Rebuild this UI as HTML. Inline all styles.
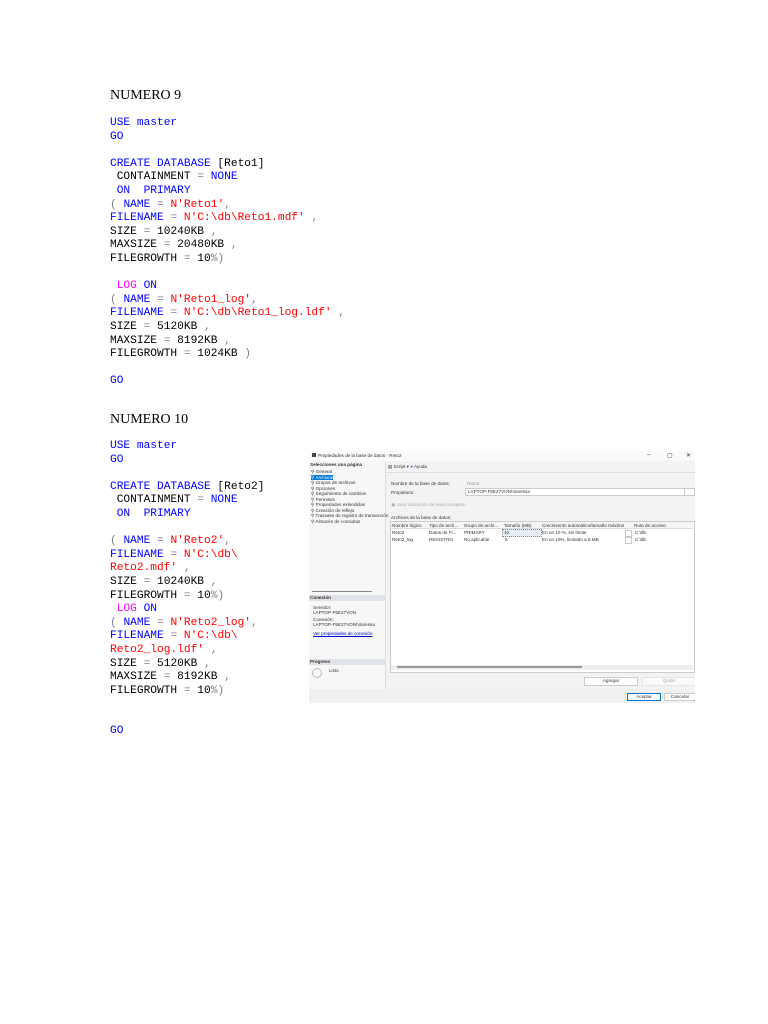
<!DOCTYPE html>
<html><head><meta charset="utf-8">
<style>
body{margin:0;width:768px;height:1024px;background:#fff;position:relative;overflow:hidden}
.h{position:absolute;left:110px;font-family:"Liberation Serif",serif;font-size:14px;color:#000;margin:0}
pre{position:absolute;left:110px;margin:0;font-family:"Liberation Mono",monospace;font-size:11.2px;line-height:13.6px;color:#000}
.b{color:#0000ff}.r{color:#ff0000}.g{color:#808080}.m{color:#ff00ff}
#ss{position:absolute;left:309px;top:451px;width:386px;height:252px;background:#f3f3f3;font-family:"Liberation Sans",sans-serif;font-size:4.6px;color:#333;overflow:hidden}
#ss div{position:absolute}
</style></head><body>
<div class="h" style="top:88px">NUMERO 9</div>
<pre style="top:117px"><span class="b">USE master</span>
<span class="b">GO</span>

<span class="b">CREATE DATABASE</span> [Reto1]
 CONTAINMENT <span class="g">=</span> <span class="b">NONE</span>
 <span class="b">ON  PRIMARY</span>
<span class="g">(</span> <span class="b">NAME</span> <span class="g">=</span> <span class="r">N'Reto1'</span><span class="g">,</span>
<span class="b">FILENAME</span> <span class="g">=</span> <span class="r">N'C:\db\Reto1.mdf'</span> <span class="g">,</span>
SIZE <span class="g">=</span> 10240KB <span class="g">,</span>
MAXSIZE <span class="g">=</span> 20480KB <span class="g">,</span>
FILEGROWTH <span class="g">=</span> 10<span class="g">%)</span>

 <span class="m">LOG</span> <span class="b">ON</span>
<span class="g">(</span> <span class="b">NAME</span> <span class="g">=</span> <span class="r">N'Reto1_log'</span><span class="g">,</span>
<span class="b">FILENAME</span> <span class="g">=</span> <span class="r">N'C:\db\Reto1_log.ldf'</span> <span class="g">,</span>
SIZE <span class="g">=</span> 5120KB <span class="g">,</span>
MAXSIZE <span class="g">=</span> 8192KB <span class="g">,</span>
FILEGROWTH <span class="g">=</span> 1024KB <span class="g">)</span>

<span class="b">GO</span></pre>

<div class="h" style="top:412px">NUMERO 10</div>
<pre style="top:440px"><span class="b">USE master</span>
<span class="b">GO</span>

<span class="b">CREATE DATABASE</span> [Reto2]
 CONTAINMENT <span class="g">=</span> <span class="b">NONE</span>
 <span class="b">ON  PRIMARY</span>

<span class="g">(</span> <span class="b">NAME</span> <span class="g">=</span> <span class="r">N'Reto2'</span><span class="g">,</span>
<span class="b">FILENAME</span> <span class="g">=</span> <span class="r">N'C:\db\</span>
<span class="r">Reto2.mdf'</span> <span class="g">,</span>
SIZE <span class="g">=</span> 10240KB <span class="g">,</span>
FILEGROWTH <span class="g">=</span> 10<span class="g">%)</span>
 <span class="m">LOG</span> <span class="b">ON</span>
<span class="g">(</span> <span class="b">NAME</span> <span class="g">=</span> <span class="r">N'Reto2_log'</span><span class="g">,</span>
<span class="b">FILENAME</span> <span class="g">=</span> <span class="r">N'C:\db\</span>
<span class="r">Reto2_log.ldf'</span> <span class="g">,</span>
SIZE <span class="g">=</span> 5120KB <span class="g">,</span>
MAXSIZE <span class="g">=</span> 8192KB <span class="g">,</span>
FILEGROWTH <span class="g">=</span> 10<span class="g">%)</span>


<span class="b">GO</span></pre>

<div id="ss">
  <div style="left:0;top:0;width:386px;height:10px;background:#fafafa"></div>
  <div style="left:3px;top:2px;width:4px;height:4px;background:#444"></div>
  <div style="left:9px;top:2px">Propiedades de la base de datos - Reto2</div>
  <div style="left:338px;top:1px;font-size:6px">–</div>
  <div style="left:358px;top:1px;font-size:6px">▢</div>
  <div style="left:377px;top:1px;font-size:6px">✕</div>
  <div style="left:0;top:10px;width:76px;height:228px;background:#f7f7f7;border-right:1px solid #ddd"></div>
  <div style="left:1px;top:11px;font-weight:bold">Selecciones una página</div>
  <div style="left:2px;top:18px;line-height:5.5px">⚲ General<br><span style="background:#0078d7;color:#fff">⚲ Archivos</span><br>⚲ Grupos de archivos<br>⚲ Opciones<br>⚲ Seguimiento de cambios<br>⚲ Permisos<br>⚲ Propiedades extendidas<br>⚲ Creación de reflejo<br>⚲ Trasvase de registro de transacción<br>⚲ Almacén de consultas</div>
  <div style="left:3px;top:140px;width:60px;height:1px;background:#888"></div>
  <div style="left:0;top:144px;width:76px;height:6px;background:#dfe3e8;font-weight:bold;padding-left:1px">Conexión</div>
  <div style="left:4px;top:154px;line-height:5px">Servidor:<br>LAPTOP-F5E27VON</div>
  <div style="left:4px;top:166px;line-height:5px">Conexión:<br>LAPTOP-F5E27VON\Vanessa</div>
  <div style="left:4px;top:180px;color:#00c;text-decoration:underline">Ver propiedades de conexión</div>
  <div style="left:0;top:208px;width:76px;height:6px;background:#dfe3e8;font-weight:bold;padding-left:1px">Progreso</div>
  <div style="left:3px;top:217px;width:8px;height:8px;border:1px solid #bbb;border-radius:50%"></div>
  <div style="left:20px;top:217px">Listo</div>
  <div style="left:79px;top:13px">▤ Script ▾ <span style="color:#1a73e8">●</span> Ayuda</div>
  <div style="left:77px;top:21px;width:309px;height:1px;background:#ddd"></div>
  <div style="left:82px;top:30px">Nombre de la base de datos:</div>
  <div style="left:158px;top:30px;color:#999">Reto2</div>
  <div style="left:82px;top:39px">Propietario:</div>
  <div style="left:156px;top:37px;width:216px;height:6px;background:#fff;border:1px solid #ccc;padding-left:2px">LAPTOP-F5E27VON\Vanessa</div>
  <div style="left:375px;top:37px;width:9px;height:6px;background:#fff;border:1px solid #ccc"></div>
  <div style="left:82px;top:51px;color:#aaa">▣ Usar indización de texto completo</div>
  <div style="left:82px;top:64px">Archivos de la base de datos:</div>
  <div style="left:81px;top:70px;width:303px;height:150px;background:#fff;border:1px solid #ccc"></div>
  <div style="left:82px;top:71px;width:302px;height:6px;background:#f4f4f4;border-bottom:1px solid #ddd"></div>
  <div style="left:83px;top:72px">Nombre lógico</div>
  <div style="left:120px;top:72px">Tipo de arch...</div>
  <div style="left:155px;top:72px">Grupo de archi...</div>
  <div style="left:195px;top:72px">Tamaño (MB)</div>
  <div style="left:233px;top:72px">Crecimiento automático/tamaño máximo</div>
  <div style="left:325px;top:72px">Ruta de acceso</div>
  <div style="left:83px;top:79px">Reto2</div><div style="left:120px;top:79px">Datos de Fi...</div><div style="left:155px;top:79px">PRIMARY</div>
  <div style="left:193px;top:78px;width:37px;height:6px;background:#e8eef5;border:1px dotted #888;padding-left:1px">10</div>
  <div style="left:233px;top:79px">En un 10 %, sin límite</div><div style="left:316px;top:79px;width:5px;height:5px;border:1px solid #ccc"></div><div style="left:326px;top:79px">C:\db</div>
  <div style="left:83px;top:86px">Reto2_log</div><div style="left:120px;top:86px">REGISTRO</div><div style="left:155px;top:86px">No aplicable</div><div style="left:196px;top:86px">5</div>
  <div style="left:233px;top:86px">En un 10%, limitado a 8 MB</div><div style="left:316px;top:86px;width:5px;height:5px;border:1px solid #ccc"></div><div style="left:326px;top:86px">C:\db</div>
  <div style="left:82px;top:214px;width:302px;height:5px;background:#eee"></div>
  <div style="left:88px;top:215px;width:185px;height:2px;background:#999"></div>
  <div style="left:275px;top:226px;width:52px;height:7px;background:#fff;border:1px solid #ccc;text-align:center">Agregar</div>
  <div style="left:333px;top:226px;width:52px;height:7px;background:#fafafa;border:1px solid #e4e4e4;text-align:center;color:#aaa">Quitar</div>
  <div style="left:0;top:238px;width:386px;height:14px;background:#f0f0f0"></div>
  <div style="left:318px;top:242px;width:32px;height:6px;background:#fff;border:1px solid #0078d7;text-align:center">Aceptar</div>
  <div style="left:355px;top:242px;width:30px;height:6px;background:#fff;border:1px solid #ccc;text-align:center">Cancelar</div>
</div>
</body></html>
